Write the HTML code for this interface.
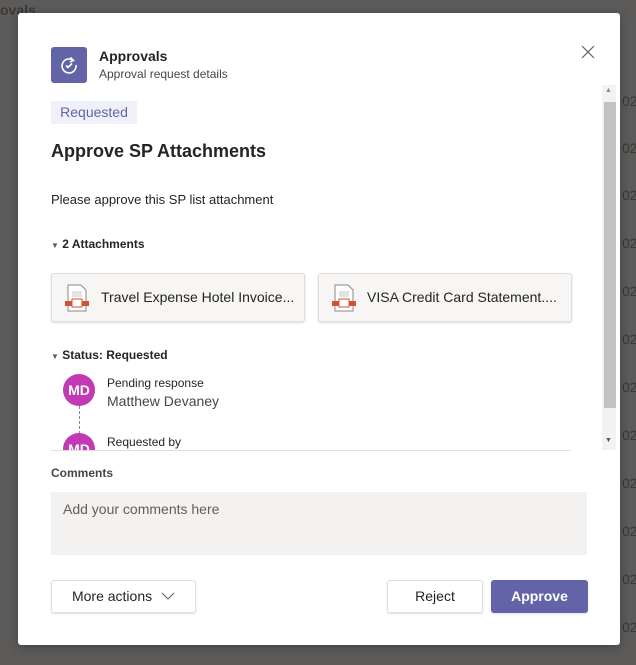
<!DOCTYPE html>
<html><head><meta charset="utf-8"><style>
body{margin:0;width:636px;height:665px;background:#5c5b5a;font-family:"Liberation Sans",sans-serif;position:relative;overflow:hidden;color:#252423}
.bgt{position:absolute;color:#3a3938;font-size:14px}
.modal{position:absolute;left:18px;top:13px;width:602px;height:632px;background:#fff;border-radius:3px;box-shadow:0 2px 10px rgba(0,0,0,.3)}
.abs{position:absolute}
.card{position:absolute;top:273px;height:47px;background:#f7f6f5;border:1px solid #e1dfdd;border-radius:3px;box-shadow:0 1px 2px rgba(0,0,0,.15);font-size:14px;line-height:47px}
.av{position:absolute;left:63px;width:32px;height:32px;border-radius:50%;background:#c239b3;color:#fff;font-weight:bold;font-size:14px;text-align:center;line-height:32px}
.btn{position:absolute;top:580px;height:31px;border:1px solid #e1dfdd;border-radius:3px;box-shadow:0 1px 2px rgba(0,0,0,.12);font-size:14px;text-align:center;line-height:31px;background:#fff}
</style></head><body>
<div class="bgt" style="left:0;top:2px;font-weight:bold">ovals</div>
<div class="bgt" style="left:622px;top:93px">024</div>
<div class="bgt" style="left:622px;top:140px">024</div>
<div class="bgt" style="left:622px;top:187px">024</div>
<div class="bgt" style="left:622px;top:235px">024</div>
<div class="bgt" style="left:622px;top:283px">024</div>
<div class="bgt" style="left:622px;top:331px">024</div>
<div class="bgt" style="left:622px;top:379px">024</div>
<div class="bgt" style="left:622px;top:427px">024</div>
<div class="bgt" style="left:622px;top:475px">024</div>
<div class="bgt" style="left:622px;top:523px">024</div>
<div class="bgt" style="left:622px;top:571px">024</div>
<div class="bgt" style="left:622px;top:619px">024</div>
<div class="modal"></div>
<div class="abs" style="left:51px;top:47px;width:36px;height:36px;background:#6264a7;border-radius:3px">
<svg width="36" height="36" viewBox="0 0 36 36"><path d="M22.5 13.5A7 7 0 1 0 25 18" fill="none" stroke="#fff" stroke-width="1.6"/><path d="M19.5 10.5l3 3-3.5 1.5" fill="none" stroke="#fff" stroke-width="1.6"/><path d="M15 18.5l2 2 4-4" fill="none" stroke="#fff" stroke-width="1.6"/></svg></div>
<div class="abs" style="left:99px;top:48px;font-size:14px;font-weight:bold">Approvals</div>
<div class="abs" style="left:99px;top:67px;font-size:12px;color:#484644">Approval request details</div>
<svg class="abs" style="left:580px;top:44px" width="16" height="16"><path d="M2 2L14 14M14 2L2 14" stroke="#605e5c" stroke-width="1.2"/></svg>
<div class="abs" style="left:51px;top:101px;width:86px;height:23px;background:#f0f0f8;color:#6264a7;font-size:14px;line-height:23px;text-align:center">Requested</div>
<div class="abs" style="left:51px;top:141px;font-size:18px;font-weight:bold">Approve SP Attachments</div>
<div class="abs" style="left:51px;top:192px;font-size:13px">Please approve this SP list attachment</div>
<div class="abs" style="left:51px;top:237px;font-size:12px;font-weight:bold"><span style="font-size:8px;color:#605e5c">▼</span> 2 Attachments</div>
<div class="card" style="left:51px;width:252px"><svg class="abs" style="left:12px;top:10px" width="26" height="28"><path d="M4 1h13l5 5v21H4z" fill="#fff" stroke="#8a8886"/><path d="M8 8h10M8 10h10M8 12h10" stroke="#c8c6c4"/><rect x="1" y="17" width="24" height="5" fill="#d35230"/><rect x="8" y="15" width="10" height="8" fill="#fff" stroke="#d35230"/></svg><span style="position:absolute;left:49px">Travel Expense Hotel Invoice...</span></div>
<div class="card" style="left:318px;width:252px"><svg class="abs" style="left:12px;top:10px" width="26" height="28"><path d="M4 1h13l5 5v21H4z" fill="#fff" stroke="#8a8886"/><path d="M8 8h10M8 10h10M8 12h10" stroke="#c8c6c4"/><rect x="1" y="17" width="24" height="5" fill="#d35230"/><rect x="8" y="15" width="10" height="8" fill="#fff" stroke="#d35230"/></svg><span style="position:absolute;left:48px">VISA Credit Card Statement....</span></div>
<div class="abs" style="left:51px;top:348px;font-size:12px;font-weight:bold"><span style="font-size:8px;color:#605e5c">▼</span> Status: Requested</div>
<div class="abs" style="left:79px;top:406px;height:28px;border-left:1px dashed #8a8886"></div>
<div class="av" style="top:374px">MD</div>
<div class="abs" style="left:107px;top:376px;font-size:12px">Pending response</div>
<div class="abs" style="left:107px;top:393px;font-size:14px;color:#484644">Matthew Devaney</div>
<div class="abs" style="left:51px;top:430px;width:520px;height:20px;overflow:hidden"><div class="av" style="left:12px;top:3px">MD</div><div class="abs" style="left:56px;top:5px;font-size:12px">Requested by</div></div>
<div class="abs" style="left:51px;top:450px;width:520px;height:1px;background:#e1dfdd"></div>
<div class="abs" style="left:602px;top:85px;width:14px;height:365px;background:#f3f2f1"><div class="abs" style="left:2px;top:17px;width:12px;height:306px;background:#c2c2c2"></div><div class="abs" style="left:3px;top:2px;font-size:7px;color:#888">▲</div><div class="abs" style="left:3px;top:352px;font-size:7px;color:#555">▼</div></div>
<div class="abs" style="left:51px;top:466px;font-size:12px;font-weight:bold;color:#484644">Comments</div>
<div class="abs" style="left:51px;top:492px;width:536px;height:63px;background:#f3f2f1"><div style="padding:9px 12px;font-size:14px;color:#605e5c">Add your comments here</div></div>
<div class="btn" style="left:51px;width:143px">More actions <svg width="14" height="10" style="margin-left:5px"><path d="M1 2l6 6 6-6" fill="none" stroke="#605e5c"/></svg></div>
<div class="btn" style="left:387px;width:94px">Reject</div>
<div class="btn" style="left:491px;width:95px;background:#6264a7;border-color:#6264a7;color:#fff;font-weight:bold">Approve</div>
</body></html>
